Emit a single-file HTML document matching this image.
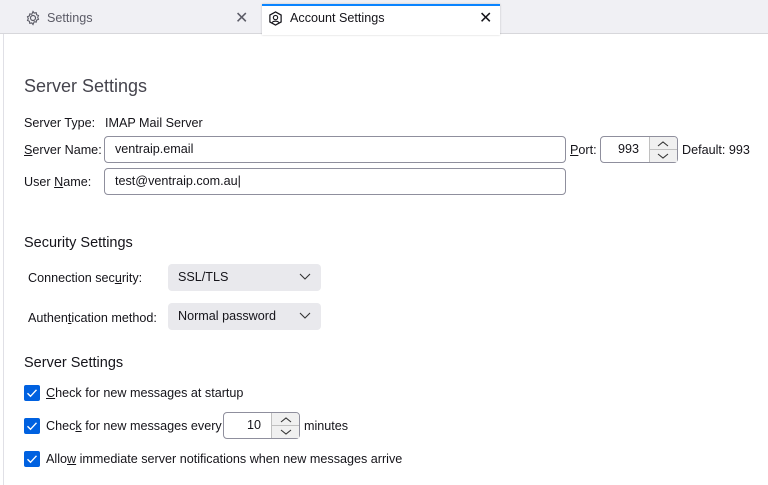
<!DOCTYPE html>
<html><head><style>
*{box-sizing:border-box;margin:0;padding:0}
body{width:768px;height:485px;overflow:hidden;background:#fff;font-family:"Liberation Sans",sans-serif;font-size:12.6px;color:#15141a;position:relative}
.a{position:absolute;white-space:nowrap}
.tabs{position:absolute;left:0;top:0;width:768px;height:34px;background:#f0f0f4;border-bottom:1px solid #d7d7db}
.tab2{position:absolute;left:262px;top:4px;width:238px;height:31px;background:#fff;border-top:2px solid #0a84ff;box-shadow:0 0 2px rgba(0,0,0,.2)}
.inp{position:absolute;border:1px solid #8f8f9d;border-radius:4px;background:#fff;padding-left:10px;line-height:24px}
.sel{position:absolute;background:#e9e9ed;border-radius:4px;padding-left:10px;line-height:27px}
.cb{position:absolute;left:24px;width:16px;height:16px;background:#0061e0;border-radius:2px}
.spin{position:absolute;top:0;right:0;width:28px;height:100%;border-left:1px solid #c0c0c0}
.spin div{height:50%;background:#f0f0f0;border-bottom:1px solid #c0c0c0}
u{text-decoration:underline}
</style></head><body>
<div class="tabs"></div>
<div style="position:absolute;left:3px;top:34px;width:1px;height:451px;background:#e0e0e6"></div>
<svg class="a" style="left:25px;top:10px" width="16" height="16" viewBox="0 0 16 16"><circle cx="8" cy="8" r="2.5" fill="none" stroke="#5b5b66" stroke-width="1.2"/><path d="M8 1.5l1.2 1.6 2-.4.4 2 1.9.8-.8 1.9.8 1.9-1.9.8-.4 2-2-.4L8 14.5l-1.2-1.6-2 .4-.4-2-1.9-.8.8-1.9-.8-1.9 1.9-.8.4-2 2 .4z" fill="none" stroke="#5b5b66" stroke-width="1.1"/></svg>
<div class="a" style="left:47px;top:11px;color:#5b5b66">Settings</div>
<div class="a" style="left:235px;top:8px;font-size:16px;color:#5b5b66">✕</div>
<div class="tab2"></div>
<svg class="a" style="left:268px;top:11px" width="15" height="15" viewBox="0 0 16 16"><path d="M8 1l6 3.3v7.4L8 15 2 11.7V4.3z" fill="none" stroke="#15141a" stroke-width="1.3"/><circle cx="8" cy="7" r="2.3" fill="none" stroke="#15141a" stroke-width="1.2"/><path d="M4.5 12.3c1-2 6-2 7 0" fill="none" stroke="#15141a" stroke-width="1.2"/></svg>
<div class="a" style="left:290px;top:11px">Account Settings</div>
<div class="a" style="left:479px;top:8px;font-size:16px">✕</div>

<div class="a" style="left:24px;top:76px;font-size:18px;color:#45444d">Server Settings</div>
<div class="a" style="left:24px;top:116px">Server Type:</div>
<div class="a" style="left:105px;top:116px">IMAP Mail Server</div>
<div class="a" style="left:24px;top:143px"><u>S</u>erver Name:</div>
<div class="inp" style="left:104px;top:136px;width:462px;height:27px">ventraip.email</div>
<div class="a" style="left:570px;top:143px"><u>P</u>ort:</div>
<div class="inp" style="left:600px;top:136px;width:78px;height:27px;text-align:right;padding-right:38px">993<div class="spin"><div style="border-radius:0 3px 0 0"></div><div style="border:0"></div></div></div>
<svg class="a" style="left:656px;top:139px" width="14" height="22"><path d="M2 7l5-4 5 4M2 15l5 4 5-4" fill="none" stroke="#333" stroke-width="1.1"/></svg>
<div class="a" style="left:682px;top:143px">Default: 993</div>
<div class="a" style="left:24px;top:175px">User <u>N</u>ame:</div>
<div class="inp" style="left:104px;top:168px;width:462px;height:27px">test@ventraip.com.au|</div>

<div class="a" style="left:24px;top:235px;font-size:14.5px">Security Settings</div>
<div class="a" style="left:28px;top:271px">Connection sec<u>u</u>rity:</div>
<div class="sel" style="left:168px;top:264px;width:153px;height:27px">SSL/TLS</div>
<div class="a" style="left:28px;top:311px">Authen<u>t</u>ication method:</div>
<div class="sel" style="left:168px;top:303px;width:153px;height:27px">Normal password</div>
<svg class="a" style="left:299px;top:273px" width="12" height="8"><path d="M1 1l5 5 5-5" fill="none" stroke="#333" stroke-width="1.1"/></svg>
<svg class="a" style="left:299px;top:312px" width="12" height="8"><path d="M1 1l5 5 5-5" fill="none" stroke="#333" stroke-width="1.1"/></svg>

<div class="a" style="left:24px;top:355px;font-size:14.5px">Server Settings</div>
<div class="cb" style="top:385px"><svg width="16" height="16"><path d="M3.5 8.3l3 3 6-6.5" fill="none" stroke="#fff" stroke-width="1.4"/></svg></div>
<div class="a" style="left:46px;top:386px"><u>C</u>heck for new messages at startup</div>
<div class="cb" style="top:418px"><svg width="16" height="16"><path d="M3.5 8.3l3 3 6-6.5" fill="none" stroke="#fff" stroke-width="1.4"/></svg></div>
<div class="a" style="left:46px;top:419px">Chec<u>k</u> for new messages every</div>
<div class="inp" style="left:223px;top:412px;width:77px;height:27px;text-align:right;padding-right:38px">10<div class="spin"><div style="border-radius:0 3px 0 0"></div><div style="border:0"></div></div></div>
<svg class="a" style="left:279px;top:415px" width="14" height="22"><path d="M2 7l5-4 5 4M2 15l5 4 5-4" fill="none" stroke="#333" stroke-width="1.1"/></svg>
<div class="a" style="left:304px;top:419px">minutes</div>
<div class="cb" style="top:451px"><svg width="16" height="16"><path d="M3.5 8.3l3 3 6-6.5" fill="none" stroke="#fff" stroke-width="1.4"/></svg></div>
<div class="a" style="left:46px;top:452px">Allo<u>w</u> immediate server notifications when new messages arrive</div>
</body></html>
